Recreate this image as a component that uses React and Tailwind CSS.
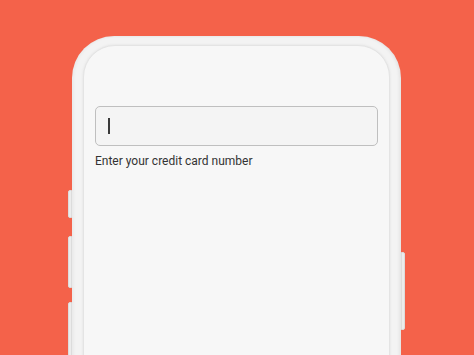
import React from 'react';

const SideButton = ({ className }) => (
    <div className={`absolute w-[4px] bg-[#ececec] border border-[#dcdcdc] ${className}`}></div>
);

const App = () => {
    return (
        <div className="w-[474px] h-[355px] overflow-hidden bg-[#f4624a] pt-[36px] pl-[72px]" style={{ fontFamily: 'Roboto, "Liberation Sans", sans-serif' }}>
            <div className="relative w-[329px] h-[360px]">
                {/* volume / power keys */}
                <SideButton className="-left-[4px] top-[154px] h-[28px] rounded-l-[2px]" />
                <SideButton className="-left-[4px] top-[200px] h-[52px] rounded-l-[2px]" />
                <SideButton className="-left-[4px] top-[266px] h-[60px] rounded-l-[2px]" />
                <SideButton className="-right-[4px] top-[216px] h-[78px] rounded-r-[2px]" />
                <div className="w-full h-full rounded-t-[42px] bg-[#f3f3f3] shadow-[inset_-2px_0_3px_rgba(0,0,0,0.06),inset_2px_0_3px_rgba(0,0,0,0.04)] pt-[9px] px-[11px]">
                    <div className="h-full rounded-t-[32px] bg-[#f7f7f7] border border-[#e4e4e4] shadow-[0_0_3px_rgba(0,0,0,0.08)] pt-[60px] px-[11px]">
                        <div className="h-[40px] rounded-[5px] border-[1.5px] border-[#bfbfbf] bg-[#f4f4f4] flex items-center pl-[12px]">
                            <div className="w-[2px] h-[16px] bg-[#3a3a3a]"></div>
                        </div>
                        <div className="mt-[7px] text-[12px] text-[#333333] leading-[16px]">Enter your credit card number</div>
                    </div>
                </div>
            </div>
        </div>
    );
};

export default App;
